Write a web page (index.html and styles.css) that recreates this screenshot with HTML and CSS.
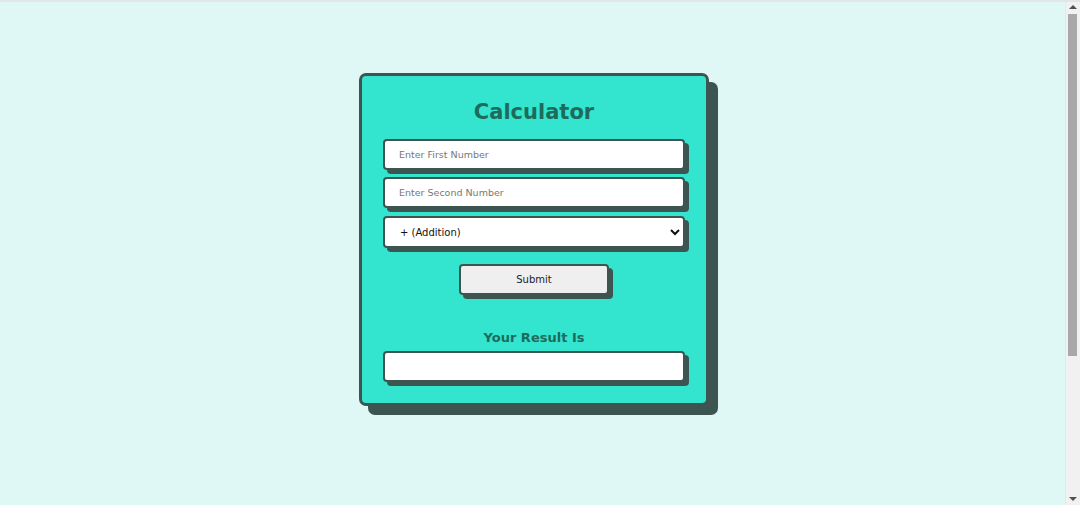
FILE: index.html
```html
<!DOCTYPE html>
<html lang="en">
<head>
<meta charset="utf-8">
<title>Calculator</title>
<link rel="stylesheet" href="styles.css">
</head>
<body>
<main class="page">
  <section class="card">
    <h1 class="title">Calculator</h1>
    <form class="form">
      <input class="field" type="text" placeholder="Enter First Number">
      <input class="field" type="text" placeholder="Enter Second Number">
      <select class="field select">
        <option>+ (Addition)</option>
        <option>- (Subtraction)</option>
        <option>* (Multiplication)</option>
        <option>/ (Division)</option>
      </select>
      <button class="submit" type="button">Submit</button>
    </form>
    <h2 class="result-title">Your Result Is</h2>
    <div class="result"></div>
  </section>
</main>
<div class="scrollbar" aria-hidden="true">
  <span class="arrow arrow-up"></span>
  <span class="thumb"></span>
  <span class="arrow arrow-down"></span>
</div>
</body>
</html>
```
FILE: styles.css
```css
html {
  border-top: 2px solid #e2e6e8;
  background: #e0f8f5;
  overflow: hidden;
}
body {
  margin: 0;
  font-family: "DejaVu Sans", "Open Sans", sans-serif;
  background: #e0f8f5;
}
.page {
  width: calc(100% - 15px);
  min-height: 490px;
  padding-top: 71px;
  box-sizing: border-box;
  display: flex;
  justify-content: center;
  align-items: flex-start;
}
.card {
  width: 350px;
  box-sizing: border-box;
  background: #33e4cf;
  border: 3px solid #3d5551;
  border-radius: 7px;
  box-shadow: 9px 9px 0 #3d5551;
  padding: 20px 21px 21px;
  display: flex;
  flex-direction: column;
  margin-left: 3px;
}
.title {
  margin: 0 0 11px;
  text-align: center;
  font-size: 21px;
  font-weight: bold;
  color: #1e6b5c;
  line-height: 32px;
}
.form {
  display: flex;
  flex-direction: column;
  gap: 7px;
}
.field {
  display: block;
  width: 100%;
  height: 31px;
  box-sizing: border-box;
  border: 2px solid #3d5551;
  border-radius: 4px;
  box-shadow: 4px 4px 0 #3d5551;
  background: #fff;
  padding: 0 14px;
  font-family: inherit;
  font-size: 9.5px;
  color: #222;
  outline: none;
}
.field::placeholder {
  color: #777;
}
.select {
  height: 32px;
  padding: 0 11px;
  font-size: 10px;
  color: #111;
  margin-top: 1px;
}
.submit {
  align-self: center;
  width: 150px;
  height: 31px;
  margin-top: 9px;
  border: 2px solid #3d5551;
  border-radius: 4px;
  box-shadow: 4px 4px 0 #3d5551;
  background: #efefef;
  font-family: inherit;
  font-size: 10px;
  color: #222;
}
.result-title {
  margin: 33px 0 3px;
  text-align: center;
  font-size: 13px;
  font-weight: bold;
  color: #1e6b5c;
  line-height: 20px;
}
.result {
  height: 31px;
  box-sizing: border-box;
  border: 2px solid #3d5551;
  border-radius: 4px;
  box-shadow: 4px 4px 0 #3d5551;
  background: #fff;
}
.scrollbar {
  position: fixed;
  top: 2px;
  right: 0;
  bottom: 0;
  width: 14px;
  background: #f1f1f1;
  border-left: 1px solid #e8e8e8;
}
.thumb {
  position: absolute;
  top: 12px;
  left: 2px;
  width: 9px;
  height: 342px;
  background: #a8a8a8;
}
.arrow {
  position: absolute;
  left: 3px;
  width: 0;
  height: 0;
  border-left: 4px solid transparent;
  border-right: 4px solid transparent;
}
.arrow-up {
  top: 3px;
  border-bottom: 4px solid #505050;
}
.arrow-down {
  bottom: 4px;
  border-top: 4px solid #505050;
}
```
